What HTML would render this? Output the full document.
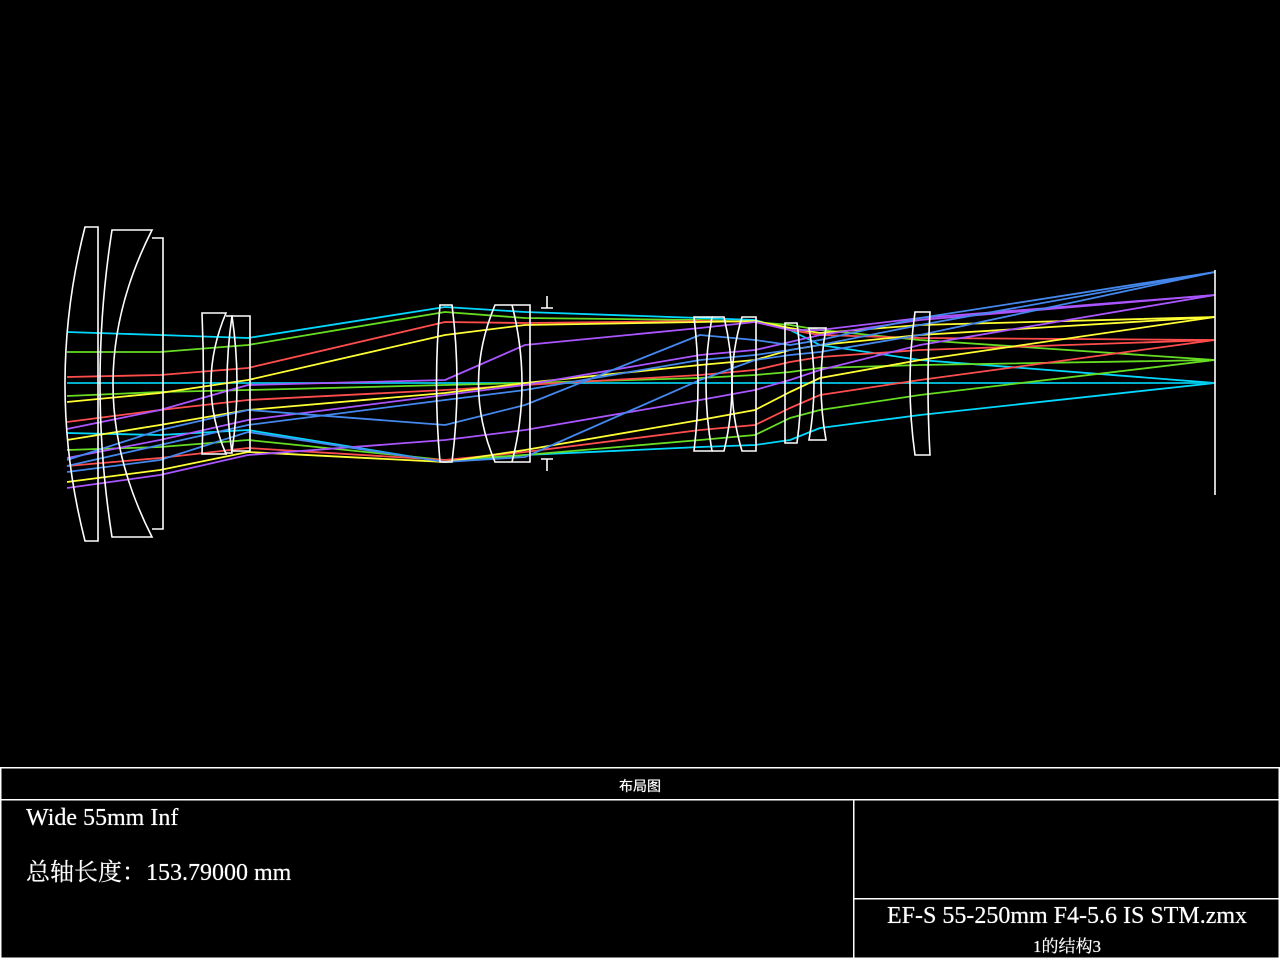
<!DOCTYPE html>
<html><head><meta charset="utf-8"><style>
html,body{margin:0;padding:0;background:#000;width:1280px;height:959px;overflow:hidden}
.t{position:absolute;color:#fff;font-family:"Liberation Serif","Noto Serif CJK SC",serif;white-space:nowrap;text-shadow:0 0 0.6px #fff}
</style></head><body>
<svg width="1280" height="959" style="position:absolute;left:0;top:0" xmlns="http://www.w3.org/2000/svg">
<g fill="none" stroke-width="1.8" stroke-linejoin="round" id="rays"></g>
<g fill="none" stroke="#fff" stroke-width="1.6">
<path d="M85,227 Q45,384 85,541 L98,541 L98,227 Z"/>
<path d="M112,230 Q88,384 112,537 L152,537 Q74,384 152,230 Z"/>
<path d="M152,238 L163,238 L163,529 L152,529"/>
<path d="M202,313 L226,313 Q196,384 226,454 L202,454 Q205,384 202,313 Z"/>
<path d="M226,316 L232,316 Q222,384 232,453 L226,453"/>
<path d="M232,316 L250,316 L250,451 L232,451 Q242,384 232,316 Z"/>
<path d="M440,305 L452,305 Q462,384 452,462 L440,462 Q433,384 440,305 Z"/>
<path d="M495,305 L530,305 L530,462 L495,462 Q462,384 495,305 Z M512,305 Q532,384 512,462"/>
<path d="M547,296 L547,308 M541,308 L553,308 M547,459 L547,471 M541,459 L553,459"/>
<path d="M694,317 L712,317 Q700,384 712,451 L694,451 Q702,384 694,317 Z"/>
<path d="M712,317 L724,317 Q740,384 724,451 L712,451"/>
<path d="M742,317 L756,317 L756,451 L742,451 Q722,384 742,317 Z"/>
<path d="M785,323 L797,323 Q805,384 797,443 L785,443 Z"/>
<path d="M809,328 L826,328 Q816,384 826,440 L809,440 Q819,384 809,328 Z"/>
<path d="M915,312 L930,312 Q926,384 930,455 L915,455 Q905,384 915,312 Z"/>
<path d="M1215,270 L1215,495"/>
</g>
<g fill="none" stroke="#fff" stroke-width="1.5">
<rect x="0.75" y="767.75" width="1278.5" height="190.5"/>
<line x1="0" y1="799.75" x2="1280" y2="799.75"/>
<line x1="853.75" y1="800" x2="853.75" y2="959"/>
<line x1="854" y1="898.75" x2="1280" y2="898.75"/>
</g>
</svg>
<div class="t" style="left:0;width:1280px;top:776px;text-align:center;font-family:'Liberation Sans','Noto Sans CJK SC',sans-serif;font-size:14px">布局图</div>
<div class="t" style="left:26px;top:805px;font-size:24px">Wide 55mm Inf</div>
<div class="t" style="left:26px;top:852px;font-size:24px">总轴长度：153.79000 mm</div>
<div class="t" style="left:854px;width:426px;text-align:center;top:903px;font-size:24px">EF-S 55-250mm F4-5.6 IS STM.zmx</div>
<div class="t" style="left:854px;width:426px;text-align:center;top:932px;font-size:17px">1的结构3</div>
<script>
var xs=[67,160,248,445,525,700,755,790,820,920,1215];
var R=[
["#00d8ff",[332,335,338,307,312,318,320,330,345,360,383]],
["#00d8ff",[433,435,430,462,455,447,445,440,428,415,383]],
["#00c8e8",[383,383,383,383,383,383,383,383,383,383,383]],
["#66dd22",[352,352,345,312,318,320,322,325,330,340,360]],
["#66dd22",[450,447,440,460,455,440,435,418,410,395,360]],
["#66dd22",[396,392,390,385,383,378,375,372,368,365,360]],
["#ff4d4d",[377,375,368,322,323,321,322,330,335,338,340]],
["#ff4d4d",[466,458,448,460,452,430,425,408,395,380,340]],
["#ff4d4d",[422,410,400,390,385,375,370,362,357,350,340]],
["#ffff33",[402,393,380,335,325,322,321,328,333,325,317]],
["#ffff33",[482,470,452,462,450,420,410,392,378,360,317]],
["#ffff33",[440,425,410,393,383,365,360,350,345,335,317]],
["#aa55ff",[429,410,385,380,345,328,322,330,330,318,295]],
["#aa55ff",[488,475,455,440,430,400,390,380,370,345,295]],
["#aa55ff",[458,440,420,395,385,355,350,342,335,320,295]],
["#4488ee",[460,430,410,425,405,335,340,345,340,318,272]],
["#4488ee",[472,460,432,462,457,380,360,355,352,335,272]],
["#4488ee",[466,445,425,400,390,360,355,350,345,325,272]]];
var g=document.getElementById('rays'),s='';
R.forEach(function(r){var p=r[1].map(function(y,i){return xs[i]+','+y}).join(' ');
s+='<polyline stroke="'+r[0]+'" points="'+p+'"/>';});
g.innerHTML=s;
</script>
</body></html>
